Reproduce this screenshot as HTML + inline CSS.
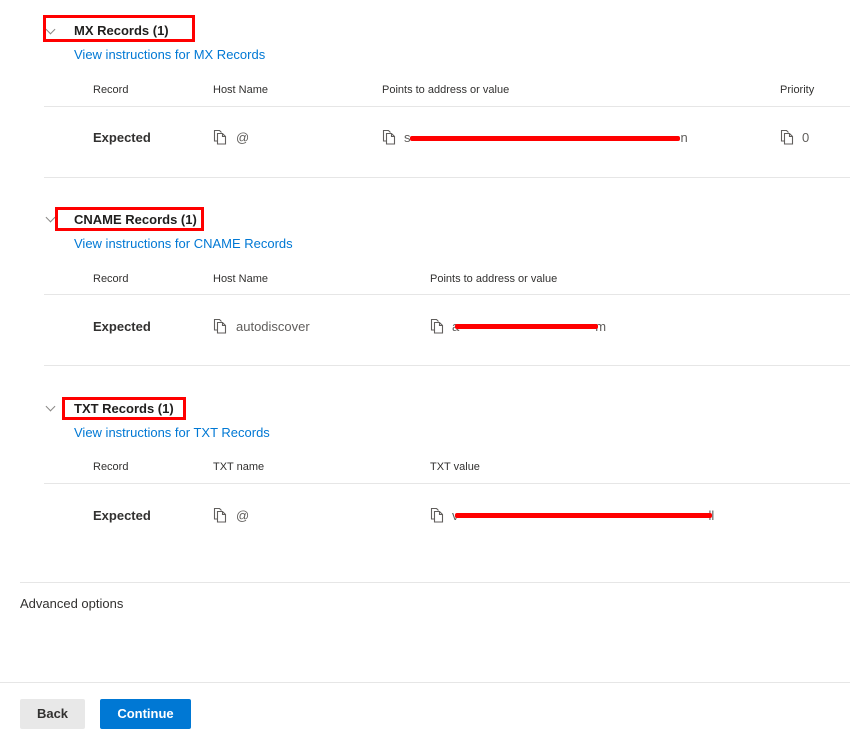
<!DOCTYPE html>
<html><head><meta charset="utf-8"><style>
*{margin:0;padding:0;box-sizing:border-box}
body{width:850px;height:734px;background:#fff;font-family:"Liberation Sans",sans-serif;color:#323130;position:relative;overflow:hidden}
.a{position:absolute;white-space:nowrap}
.h{font-size:13px;font-weight:bold;color:#201f1e}
.l{font-size:13px;color:#0078d4}
.c{font-size:11px;color:#323130}
.e{font-size:13px;font-weight:bold;color:#323130}
.v{font-size:13px;color:#605e5c}
.ln{position:absolute;height:1px;background:#e6e6e6}
.box{position:absolute;border:3px solid #f00}
.red{position:absolute;height:5px;background:#f00;border-radius:2px}
.chev{position:absolute;width:7px;height:7px;border-right:1px solid #8a8886;border-bottom:1px solid #8a8886;transform:rotate(45deg)}
svg.i{position:absolute}
</style></head><body>
<svg width="0" height="0" style="position:absolute"><defs><symbol id="cp" viewBox="0 0 14 16"><path d="M4.5 4.5h5l3 3v7.5h-8z M9.5 4.5v3h3 M4.5 12H1.5V1.5h5l2 2" fill="none" stroke="#605e5c" stroke-width="1.1"/></symbol></defs></svg>

<!-- MX -->
<div class="chev" style="left:47px;top:26px"></div>
<div class="box" style="left:43px;top:15px;width:152px;height:27px"></div>
<div class="a h" style="left:74px;top:23px">MX Records (1)</div>
<div class="a l" style="left:74px;top:47px">View instructions for MX Records</div>
<div class="a c" style="left:93px;top:84px">Record</div>
<div class="a c" style="left:213px;top:84px">Host Name</div>
<div class="a c" style="left:382px;top:84px">Points to address or value</div>
<div class="a c" style="left:780px;top:84px">Priority</div>
<div class="ln" style="left:44px;top:106px;width:806px"></div>
<div class="a e" style="left:93px;top:130px">Expected</div>
<svg class="i" style="left:213px;top:129px" width="14" height="16"><use href="#cp"/></svg>
<div class="a v" style="left:236px;top:130px">@</div>
<svg class="i" style="left:382px;top:129px" width="14" height="16"><use href="#cp"/></svg>
<div class="a v" style="left:404px;top:130px">s<span style="margin-left:270px">n</span></div>
<div class="red" style="left:410px;top:136px;width:270px"></div>
<svg class="i" style="left:780px;top:129px" width="14" height="16"><use href="#cp"/></svg>
<div class="a v" style="left:802px;top:130px">0</div>
<div class="ln" style="left:44px;top:177px;width:806px"></div>

<!-- CNAME -->
<div class="chev" style="left:47px;top:214px"></div>
<div class="box" style="left:55px;top:207px;width:149px;height:24px"></div>
<div class="a h" style="left:74px;top:212px">CNAME Records (1)</div>
<div class="a l" style="left:74px;top:236px">View instructions for CNAME Records</div>
<div class="a c" style="left:93px;top:273px">Record</div>
<div class="a c" style="left:213px;top:273px">Host Name</div>
<div class="a c" style="left:430px;top:273px">Points to address or value</div>
<div class="ln" style="left:44px;top:294px;width:806px"></div>
<div class="a e" style="left:93px;top:319px">Expected</div>
<svg class="i" style="left:213px;top:318px" width="14" height="16"><use href="#cp"/></svg>
<div class="a v" style="left:236px;top:319px">autodiscover</div>
<svg class="i" style="left:430px;top:318px" width="14" height="16"><use href="#cp"/></svg>
<div class="a v" style="left:452px;top:319px">a<span style="margin-left:136px">m</span></div>
<div class="red" style="left:455px;top:324px;width:143px"></div>
<div class="ln" style="left:44px;top:365px;width:806px"></div>

<!-- TXT -->
<div class="chev" style="left:47px;top:403px"></div>
<div class="box" style="left:62px;top:397px;width:124px;height:23px"></div>
<div class="a h" style="left:74px;top:401px">TXT Records (1)</div>
<div class="a l" style="left:74px;top:425px">View instructions for TXT Records</div>
<div class="a c" style="left:93px;top:461px">Record</div>
<div class="a c" style="left:213px;top:461px">TXT name</div>
<div class="a c" style="left:430px;top:461px">TXT value</div>
<div class="ln" style="left:44px;top:483px;width:806px"></div>
<div class="a e" style="left:93px;top:508px">Expected</div>
<svg class="i" style="left:213px;top:507px" width="14" height="16"><use href="#cp"/></svg>
<div class="a v" style="left:236px;top:508px">@</div>
<svg class="i" style="left:430px;top:507px" width="14" height="16"><use href="#cp"/></svg>
<div class="a v" style="left:452px;top:508px">v<span style="margin-left:250px">ll</span></div>
<div class="red" style="left:455px;top:513px;width:257px"></div>

<div class="ln" style="left:20px;top:582px;width:830px"></div>
<div class="a" style="left:20px;top:596px;font-size:13px;color:#323130">Advanced options</div>
<div class="ln" style="left:0;top:682px;width:850px"></div>
<div class="a" style="left:20px;top:699px;width:65px;height:30px;background:#e8e8e8;border-radius:2px;font-size:13px;font-weight:bold;color:#323130;text-align:center;line-height:30px">Back</div>
<div class="a" style="left:100px;top:699px;width:91px;height:30px;background:#0078d4;border-radius:2px;font-size:13px;font-weight:bold;color:#fff;text-align:center;line-height:30px">Continue</div>
</body></html>
